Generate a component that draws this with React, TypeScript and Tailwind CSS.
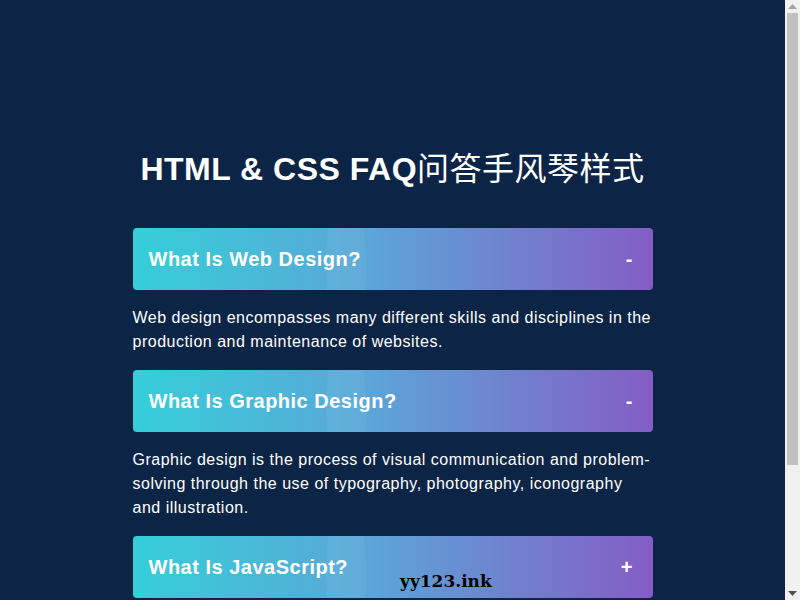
import React from "react";

type Item = { q: string; a?: string; open: boolean };

const items: Item[] = [
  {
    q: "What Is Web Design?",
    a: "Web design encompasses many different skills and disciplines in the production and maintenance of websites.",
    open: true,
  },
  {
    q: "What Is Graphic Design?",
    a: "Graphic design is the process of visual communication and problem-solving through the use of typography, photography, iconography and illustration.",
    open: true,
  },
  { q: "What Is JavaScript?", open: false },
  { q: "What Is CSS?", open: false },
];

function Header({ q, open }: { q: string; open: boolean }) {
  return (
    <div className="relative h-[62px] rounded-[4px] overflow-hidden bg-[linear-gradient(90deg,#34cfd9_0%,#5ba6d8_45%,#845dc4_100%)] flex items-center justify-between pl-4 pr-5">
      <div className="absolute left-[193px] top-[-40px] w-[40px] h-[160px] rounded-[50%] bg-white/5"></div>
      <span className="relative text-white text-[20px] font-bold tracking-[0.5px]">{q}</span>
      <span className="relative text-white text-[20px] font-bold">{open ? "-" : "+"}</span>
    </div>
  );
}

function Scrollbar() {
  return (
    <div className="w-[15px] h-full bg-[#f1f1f1] flex flex-col items-center shrink-0">
      <div className="h-[13px] w-full flex items-center justify-center">
        <svg width="9" height="5" viewBox="0 0 9 5">
          <polygon points="4.5,0 9,5 0,5" fill="#a3a3a3" />
        </svg>
      </div>
      <div className="w-[11px] h-[452px] bg-[#c1c1c1]"></div>
      <div className="flex-1"></div>
      <div className="h-[13px] w-full flex items-center justify-center">
        <svg width="9" height="5" viewBox="0 0 9 5">
          <polygon points="0,0 9,0 4.5,5" fill="#505050" />
        </svg>
      </div>
    </div>
  );
}

export default function App() {
  return (
    <div
      className="h-screen flex bg-[#0c2546] overflow-hidden"
      style={{ fontFamily: '"Liberation Sans", Arial, "Noto Sans CJK SC", sans-serif' }}
    >
      <div className="flex-1 relative overflow-hidden">
        <div className="pt-[146px] pb-[20px]">
          <h1 className="text-center text-white text-[32px] font-bold leading-[40px] tracking-[0.5px] mb-[39px]">
            HTML &amp; CSS FAQ
            <span
              className="font-normal text-[32px]"
              style={{ fontFamily: '"Noto Sans CJK SC", sans-serif' }}
            >
              问答手风琴样式
            </span>
          </h1>
          <div className="w-[520px] mx-auto">
            {items.map((it) => (
              <div key={it.q} className={it.open ? "" : "mb-[10px]"}>
                <Header q={it.q} open={it.open} />
                {it.open && (
                  <p className="text-white text-[16px] leading-[24px] tracking-[0.5px] pt-[16px] pb-[16px]">
                    {it.a}
                  </p>
                )}
              </div>
            ))}
          </div>
        </div>
        <div
          className="absolute left-[400px] top-[569px] text-black text-[17px] font-bold"
          style={{ fontFamily: '"DejaVu Serif", serif' }}
        >
          yy123.ink
        </div>
      </div>
      <Scrollbar />
    </div>
  );
}
